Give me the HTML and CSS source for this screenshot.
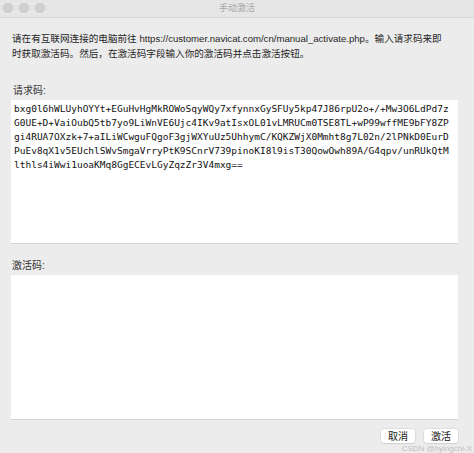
FILE: index.html
```html
<!DOCTYPE html>
<html lang="zh-CN">
<head>
    <meta charset="UTF-8">
    <title>手动激活</title>
    <link rel="stylesheet" href="styles.css">
</head>
<body>
    <div class="window">
        <div class="titlebar">
            <div class="lights">
                <span class="light"></span>
                <span class="light"></span>
                <span class="light"></span>
            </div>
            <div class="title">手动激活</div>
        </div>

        <div class="content">
            <p class="intro">请在有互联网连接的电脑前往 https://customer.navicat.com/cn/manual_activate.php。输入请求码来即<br>时获取激活码。然后，在激活码字段输入你的激活码并点击激活按钮。</p>

            <div class="field-label">请求码:</div>
            <div class="code-box request">
                <div>bxg0l6hWLUyhOYYt+EGuHvHgMkROWoSqyWQy7xfynnxGySFUy5kp47J86rpU2o+/+Mw3O6LdPd7z</div>
                <div>G0UE+D+VaiOubQ5tb7yo9LiWnVE6Ujc4IKv9atIsxOL01vLMRUCm0TSE8TL+wP99wffME9bFY8ZP</div>
                <div>gi4RUA7OXzk+7+aILiWCwguFQgoF3gjWXYuUz5UhhymC/KQKZWjX0Mmht8g7L02n/2lPNkD0EurD</div>
                <div>PuEv8qX1v5EUchlSWvSmgaVrryPtK9SCnrV739pinoKI8l9isT30QowOwh89A/G4qpv/unRUkQtM</div>
                <div>lthls4iWwi1uoaKMq8GgECEvLGyZqzZr3V4mxg==</div>
            </div>

            <div class="field-label second">激活码:</div>
            <div class="code-box activation"></div>

            <div class="actions">
                <button class="btn">取消</button>
                <button class="btn">激活</button>
            </div>
        </div>

        <div class="watermark">CSDN @hyingchi-X</div>
    </div>
</body>
</html>
```

FILE: styles.css
```css
body, html {
    margin: 0;
    padding: 0;
    height: 100%;
    background: #ececec;
    font-family: "Liberation Sans", "Noto Sans CJK SC", sans-serif;
    color: #262626;
    overflow: hidden;
}
.window {
    position: relative;
    width: 474px;
    height: 453px;
    background: #ececec;
}
.titlebar {
    position: relative;
    height: 17px;
    background: #e6e6e6;
    border-bottom: 1px solid #d8d8d8;
}
.lights {
    display: flex;
    gap: 6px;
    padding: 3px 0 0 3px;
}
.light {
    width: 8px;
    height: 8px;
    border-radius: 50%;
    background: #d2d2d2;
    border: 0.5px solid #c6c6c6;
}
.title {
    position: absolute;
    top: 0;
    left: 0;
    right: 0;
    text-align: center;
    line-height: 16px;
    font-size: 9px;
    color: #a6a6a6;
}
.content {
    padding: 13px 16px 0 11px;
    display: flex;
    flex-direction: column;
}
.intro {
    margin: 0 0 0 1px;
    font-size: 9.6px;
    line-height: 15px;
    white-space: nowrap;
}
.field-label {
    margin: 22px 0 2px 2px;
    font-size: 10px;
    line-height: 15px;
    color: #333;
}
.field-label.second {
    margin-top: 14px;
    margin-left: 1px;
}
.code-box {
    background: #fff;
    border-bottom: 1px solid #d2d2d2;
    box-sizing: border-box;
    font-family: "DejaVu Sans Mono", monospace;
    font-size: 9.5px;
    line-height: 14px;
    color: #111;
    padding: 2px 0 0 3px;
    white-space: nowrap;
    overflow: hidden;
}
.code-box.request {
    height: 144px;
}
.code-box.activation {
    height: 145px;
}
.actions {
    display: flex;
    justify-content: flex-end;
    gap: 9px;
    margin-top: 9px;
}
.btn {
    width: 34px;
    height: 14px;
    padding: 0;
    border: none;
    border-radius: 3px;
    background: #fff;
    box-shadow: 0 0 0 0.5px #cfcfcf, 0 1px 1px rgba(0,0,0,0.12);
    font-family: "Noto Sans CJK SC", sans-serif;
    font-size: 10px;
    line-height: 14px;
    color: #222;
}
.watermark {
    position: absolute;
    right: 2px;
    bottom: 0;
    font-size: 8px;
    line-height: 8px;
    color: rgba(150,150,150,0.55);
}
```
